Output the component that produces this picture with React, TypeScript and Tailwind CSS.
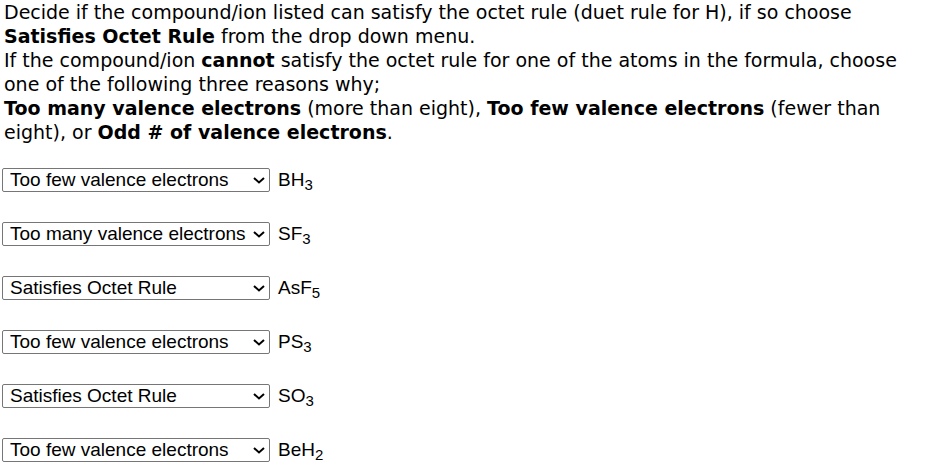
import React from 'react';

const OPTIONS = [
    'Satisfies Octet Rule',
    'Too many valence electrons',
    'Too few valence electrons',
    'Odd # of valence electrons',
];

const ROWS: { value: string; el: string; n: string }[] = [
    { value: 'Too few valence electrons', el: 'BH', n: '3' },
    { value: 'Too many valence electrons', el: 'SF', n: '3' },
    { value: 'Satisfies Octet Rule', el: 'AsF', n: '5' },
    { value: 'Too few valence electrons', el: 'PS', n: '3' },
    { value: 'Satisfies Octet Rule', el: 'SO', n: '3' },
    { value: 'Too few valence electrons', el: 'BeH', n: '2' },
];

const Row: React.FC<{ value: string; el: string; n: string }> = ({ value, el, n }) => {
    return (
        <div className="flex items-center gap-[8px] h-[24px]">
            <div className="relative w-[268px] h-[24px]">
                <select
                    defaultValue={value}
                    className="appearance-none w-full h-full border border-[#767676] rounded-[2px] bg-white pl-[7px] text-[19px] leading-[22px] text-black font-['Liberation_Sans',Arial,sans-serif]"
                >
                    {OPTIONS.map((o) => (
                        <option key={o} value={o}>{o}</option>
                    ))}
                </select>
                <svg
                    className="absolute right-[5px] top-[9px] pointer-events-none"
                    width="12"
                    height="7"
                    viewBox="0 0 12 7"
                >
                    <path d="M1 1 L6 5.5 L11 1" fill="none" stroke="#000" strokeWidth="2" />
                </svg>
            </div>
            <span className="text-[19px] text-black font-['Liberation_Sans',Arial,sans-serif] leading-[24px]">
                {el}
                <sub className="text-[15px]">{n}</sub>
            </span>
        </div>
    );
};

const App: React.FC = () => {
    return (
        <div className="w-[928px] h-[473px] bg-white overflow-hidden pl-[2px]">
            <div className="pl-[2px] text-[19px] leading-[24px] text-black whitespace-nowrap font-['DejaVu_Sans',Verdana,sans-serif]">
                Decide if the compound/ion listed can satisfy the octet rule (duet rule for H), if so choose
                <br />
                <strong>Satisfies Octet Rule</strong> from the drop down menu.
                <br />
                If the compound/ion <strong>cannot</strong> satisfy the octet rule for one of the atoms in the formula, choose
                <br />
                one of the following three reasons why;
                <br />
                <strong>Too many valence electrons</strong> (more than eight), <strong>Too few valence electrons</strong> (fewer than
                <br />
                eight), or <strong>Odd # of valence electrons</strong>.
            </div>

            <div className="mt-[24px] flex flex-col gap-[30px]">
                {ROWS.map((r, i) => (
                    <Row key={i} {...r} />
                ))}
            </div>
        </div>
    );
};

export default App;
